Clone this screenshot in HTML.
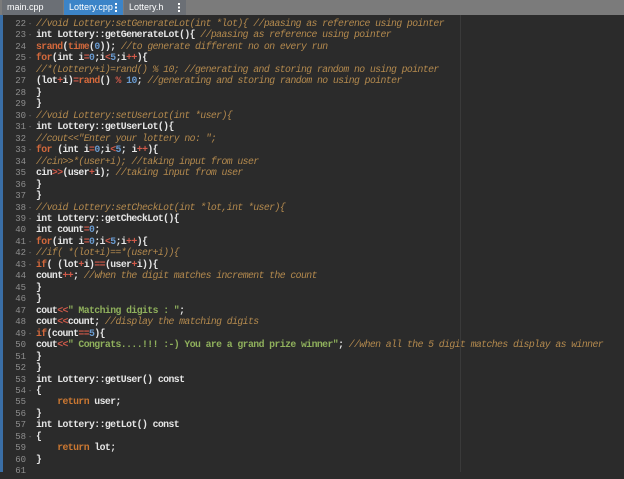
<!DOCTYPE html>
<html><head><meta charset="utf-8"><style>
body{margin:0;width:624px;height:472px;overflow:hidden;background:#2b2b2b;font-family:"Liberation Mono",monospace;}
.tabs{position:absolute;left:0;top:0;width:624px;height:15px;background:#7b7b7b;}
.tab{position:absolute;top:0;height:15px;font:9px "Liberation Sans",sans-serif;line-height:14px;color:#fff;padding-left:5px;box-sizing:border-box}
.dots{position:absolute;right:6px;top:3px;width:2px;height:9px;background:linear-gradient(#fff 0 2px,transparent 2px 3.5px,#fff 3.5px 5.5px,transparent 5.5px 7px,#fff 7px 9px)}
.bar{position:absolute;left:0;top:15px;width:3px;height:457px;background:#3a6ea5}
.margin{position:absolute;left:460px;top:15px;width:1px;height:457px;background:#3a3a3a}
.code{position:absolute;left:0;top:18px;font-size:9.8px;letter-spacing:-0.58px;line-height:11.47px;font-weight:bold;color:#e6e6e6}
.l{height:11.47px;position:relative;white-space:pre}
.n{display:inline-block;width:26px;text-align:right;color:#8e8e8e;font-weight:normal;letter-spacing:0;font-size:9px}
.f{display:inline-block;width:10px;color:#777;font-weight:normal;font-size:7px;text-indent:2px}
.c{color:#b48a4e;font-style:italic;font-weight:normal}
.k{color:#d4693c}
.o{color:#d05a4a}
.d{color:#6a9bd0}
.s{color:#8fb05c}
.r{color:#cc7832}
</style></head><body>
<div class="tabs">
<div class="tab" style="left:2px;width:61px;background:#6b6f75">main.cpp</div>
<div class="tab" style="left:64px;width:59px;background:#3c84c8">Lottery.cpp<span class="dots"></span></div>
<div class="tab" style="left:124px;width:62px;background:#6b6f75">Lottery.h<span class="dots"></span></div>
</div>
<div class="bar"></div><div class="margin"></div>
<div class="code"><div class="l"><span class="n">22</span><span class="f">-</span><span class="c">//void Lottery:setGenerateLot(int *lot){ //paasing as reference using pointer</span></div><div class="l"><span class="n">23</span><span class="f">-</span>int Lottery::getGenerateLot(){ <span class="c">//paasing as reference using pointer</span></div><div class="l"><span class="n">24</span><span class="f"> </span><span class="k">srand</span>(<span class="k">time</span>(<span class="d">0</span>)); <span class="c">//to generate different no on every run</span></div><div class="l"><span class="n">25</span><span class="f">-</span><span class="k">for</span>(int i<span class="o">=</span><span class="d">0</span>;i<span class="o">&lt;</span><span class="d">5</span>;i<span class="o">++</span>){</div><div class="l"><span class="n">26</span><span class="f"> </span><span class="c">//*(Lottery+i)=rand() % 10; //generating and storing random no using pointer</span></div><div class="l"><span class="n">27</span><span class="f"> </span>(lot<span class="o">+</span>i)<span class="o">=</span><span class="k">rand</span>() <span class="o">%</span> <span class="d">10</span>; <span class="c">//generating and storing random no using pointer</span></div><div class="l"><span class="n">28</span><span class="f"> </span>}</div><div class="l"><span class="n">29</span><span class="f"> </span>}</div><div class="l"><span class="n">30</span><span class="f">-</span><span class="c">//void Lottery:setUserLot(int *user){</span></div><div class="l"><span class="n">31</span><span class="f">-</span>int Lottery::getUserLot(){</div><div class="l"><span class="n">32</span><span class="f"> </span><span class="c">//cout&lt;&lt;"Enter your lottery no: ";</span></div><div class="l"><span class="n">33</span><span class="f">-</span><span class="k">for</span> (int i<span class="o">=</span><span class="d">0</span>;i<span class="o">&lt;</span><span class="d">5</span>; i<span class="o">++</span>){</div><div class="l"><span class="n">34</span><span class="f"> </span><span class="c">//cin&gt;&gt;*(user+i); //taking input from user</span></div><div class="l"><span class="n">35</span><span class="f"> </span>cin<span class="o">&gt;&gt;</span>(user<span class="o">+</span>i); <span class="c">//taking input from user</span></div><div class="l"><span class="n">36</span><span class="f"> </span>}</div><div class="l"><span class="n">37</span><span class="f"> </span>}</div><div class="l"><span class="n">38</span><span class="f">-</span><span class="c">//void Lottery:setCheckLot(int *lot,int *user){</span></div><div class="l"><span class="n">39</span><span class="f">-</span>int Lottery::getCheckLot(){</div><div class="l"><span class="n">40</span><span class="f"> </span>int count<span class="o">=</span><span class="d">0</span>;</div><div class="l"><span class="n">41</span><span class="f">-</span><span class="k">for</span>(int i<span class="o">=</span><span class="d">0</span>;i<span class="o">&lt;</span><span class="d">5</span>;i<span class="o">++</span>){</div><div class="l"><span class="n">42</span><span class="f">-</span><span class="c">//if( *(lot+i)==*(user+i)){</span></div><div class="l"><span class="n">43</span><span class="f">-</span><span class="k">if</span>( (lot<span class="o">+</span>i)<span class="o">==</span>(user<span class="o">+</span>i)){</div><div class="l"><span class="n">44</span><span class="f"> </span>count<span class="o">++</span>; <span class="c">//when the digit matches increment the count</span></div><div class="l"><span class="n">45</span><span class="f"> </span>}</div><div class="l"><span class="n">46</span><span class="f"> </span>}</div><div class="l"><span class="n">47</span><span class="f"> </span>cout<span class="o">&lt;&lt;</span><span class="s">" Matching digits : "</span>;</div><div class="l"><span class="n">48</span><span class="f"> </span>cout<span class="o">&lt;&lt;</span>count; <span class="c">//display the matching digits</span></div><div class="l"><span class="n">49</span><span class="f">-</span><span class="k">if</span>(count<span class="o">==</span><span class="d">5</span>){</div><div class="l"><span class="n">50</span><span class="f"> </span>cout<span class="o">&lt;&lt;</span><span class="s">" Congrats....!!! :-) You are a grand prize winner"</span>; <span class="c">//when all the 5 digit matches display as winner</span></div><div class="l"><span class="n">51</span><span class="f"> </span>}</div><div class="l"><span class="n">52</span><span class="f"> </span>}</div><div class="l"><span class="n">53</span><span class="f"> </span>int Lottery::getUser() const</div><div class="l"><span class="n">54</span><span class="f">-</span>{</div><div class="l"><span class="n">55</span><span class="f"> </span>    <span class="r">return</span> user;</div><div class="l"><span class="n">56</span><span class="f"> </span>}</div><div class="l"><span class="n">57</span><span class="f"> </span>int Lottery::getLot() const</div><div class="l"><span class="n">58</span><span class="f">-</span>{</div><div class="l"><span class="n">59</span><span class="f"> </span>    <span class="r">return</span> lot;</div><div class="l"><span class="n">60</span><span class="f"> </span>}</div><div class="l"><span class="n">61</span><span class="f"> </span></div></div>
</body></html>
